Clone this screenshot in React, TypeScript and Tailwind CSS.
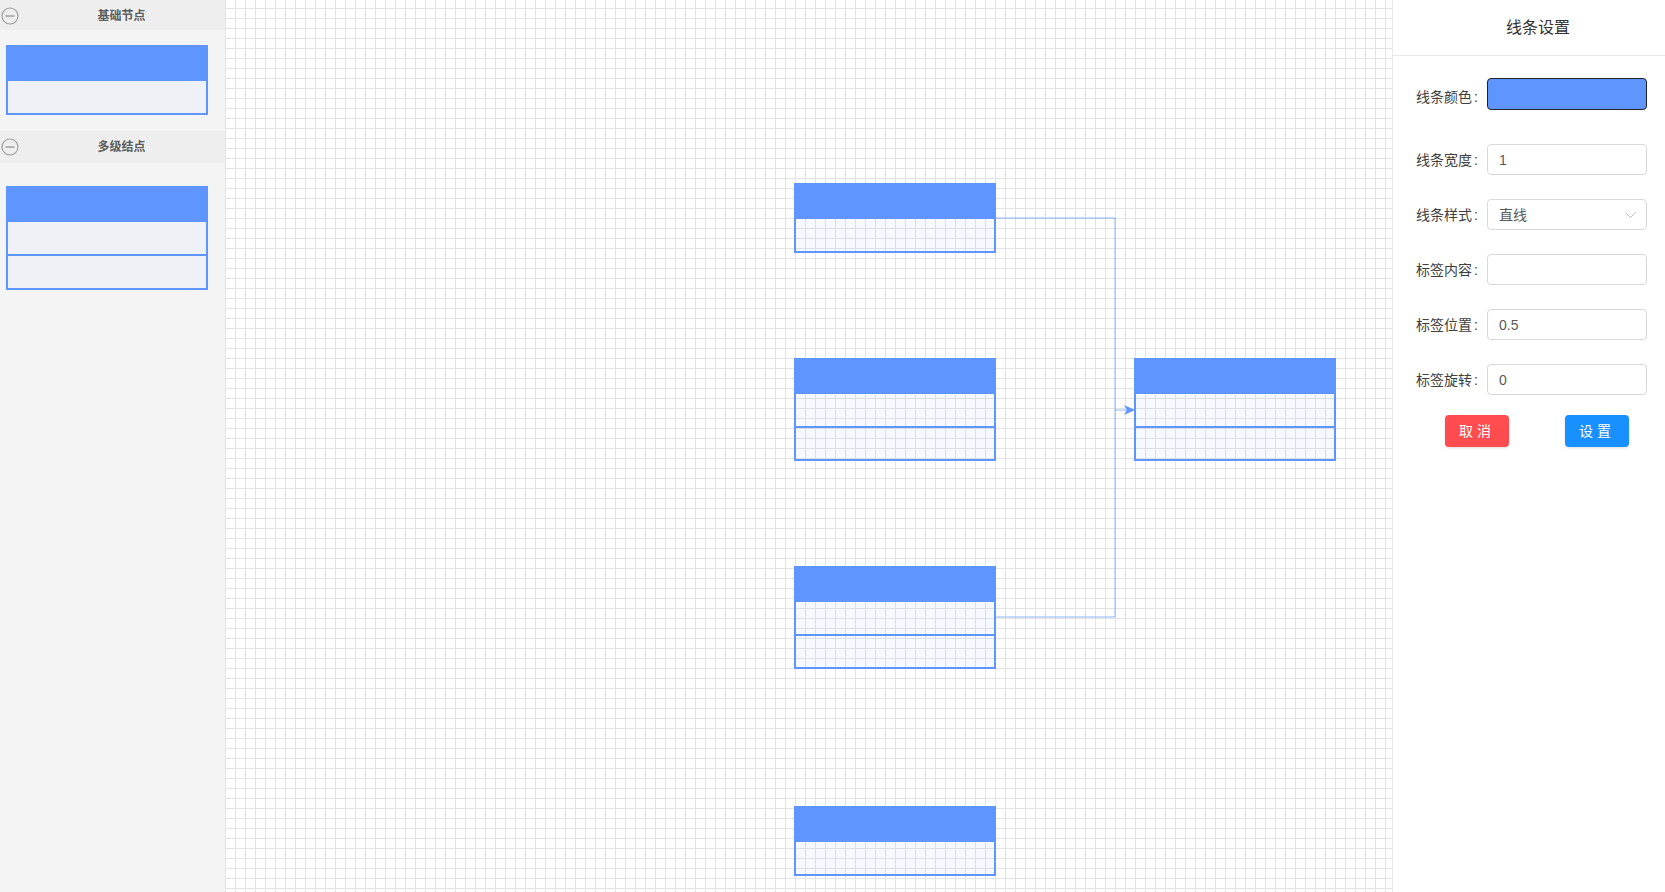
import React from "react";

const font = { fontFamily: '"Liberation Sans", "Noto Sans CJK SC", sans-serif' };

function MinusCircle() {
  return (
    <svg width="18" height="18" viewBox="0 0 18 18" className="shrink-0">
      <circle cx="9" cy="9" r="8" fill="none" stroke="#9a9a9a" strokeWidth="1.1" />
      <line x1="4.5" y1="9" x2="13.5" y2="9" stroke="#9a9a9a" strokeWidth="1.4" />
    </svg>
  );
}

function SideNode({ rows }: { rows: number }) {
  return (
    <div className="w-[202px] border-2 border-[#5f95ff] bg-[#5f95ff]">
      <div className="h-[34px]" />
      {Array.from({ length: rows }).map((_, i) => (
        <div
          key={i}
          className={i === 0 ? "h-[32px] bg-[#eef1f6]" : "h-[34px] border-t-2 border-[#5f95ff] bg-[#eef1f6]"}
        />
      ))}
    </div>
  );
}

function CanvasNode({ left, top, rows }: { left: number; top: number; rows: number }) {
  return (
    <div className="absolute w-[202px] border-2 border-[#5f95ff]" style={{ left, top }}>
      <div className="h-[34px] bg-[#5f95ff]" />
      {Array.from({ length: rows }).map((_, i) => (
        <div
          key={i}
          className={
            i === 0
              ? "h-[31.5px] bg-[rgba(95,149,255,0.06)]"
              : "h-[33.5px] border-t-2 border-[#5f95ff] bg-[rgba(95,149,255,0.06)]"
          }
        />
      ))}
    </div>
  );
}

function Field({ label, children, shift }: { label: string; children: React.ReactNode; shift?: boolean }) {
  return (
    <div className="flex items-center">
      <div
        className={
          shift
            ? "flex w-[94px] shrink-0 justify-end pt-[7px] text-[14px] text-[#404040]"
            : "flex w-[94px] shrink-0 justify-end pt-[1px] text-[14px] text-[#404040]"
        }
      >
        <span>{label}</span>
        <span className="ml-[2px] mr-[9px]">:</span>
      </div>
      {children}
    </div>
  );
}

function TextInput({ value }: { value: string }) {
  return (
    <div className="flex h-[31px] w-[160px] items-center rounded-[4px] border border-[#d9d9d9] bg-white px-[11px] pt-[1px] text-[14px] text-[#595959]">
      {value}
    </div>
  );
}

export default function App() {
  return (
    <div className="flex h-[892px] w-full overflow-hidden bg-white" style={font}>
      {/* left stencil */}
      <div className="w-[225px] shrink-0 bg-[#f4f4f4]">
        <div className="flex h-[30px] items-center bg-[#eeeeee] pl-[1px] pt-[2px]">
          <MinusCircle />
          <div className="flex-1 pr-[1px] text-center text-[12px] font-bold text-[#5c5c5c]">基础节点</div>
        </div>
        <div className="px-[6px] pb-[16px] pt-[15px]">
          <SideNode rows={1} />
        </div>
        <div className="flex h-[32px] items-center bg-[#eeeeee] pl-[1px]">
          <MinusCircle />
          <div className="flex-1 pr-[1px] text-center text-[12px] font-bold text-[#5c5c5c]">多级结点</div>
        </div>
        <div className="px-[6px] pt-[23px]">
          <SideNode rows={2} />
        </div>
      </div>

      {/* canvas */}
      <div className="relative flex-1 bg-white bg-[linear-gradient(to_right,#e3e3e3_1px,transparent_1px),linear-gradient(to_bottom,#e3e3e3_1px,transparent_1px)] bg-[size:10px_10px] bg-[position:0_8px]">
        <svg className="absolute left-0 top-0 h-full w-full" fill="none">
          <path d="M771 218 H890 V410 H903" stroke="#5f95ff" strokeWidth="1" opacity="0.7" />
          <path d="M771 617 H890 V410" stroke="#5f95ff" strokeWidth="1" opacity="0.7" />
          <path d="M910 410 L899 405 L902 410 L899 415 Z" fill="#5f95ff" />
        </svg>
        <CanvasNode left={569} top={183} rows={1} />
        <CanvasNode left={569} top={358} rows={2} />
        <CanvasNode left={569} top={566} rows={2} />
        <CanvasNode left={569} top={806} rows={1} />
        <CanvasNode left={909} top={358} rows={2} />
      </div>

      {/* right config panel */}
      <div className="w-[273px] shrink-0 border-l border-[#e8e8e8] bg-white">
        <div className="flex h-[56px] items-center justify-center border-b border-[#e8e8e8] pl-[18px] text-[16px] text-[#333]">
          线条设置
        </div>
        <div className="flex flex-col pr-[18px]">
          <div className="mt-[22px]">
            <Field label="线条颜色" shift>
              <div className="h-[32px] w-[160px] rounded-[4px] border border-[#222] bg-[#5f95ff]" />
            </Field>
          </div>
          <div className="mt-[34px] flex flex-col gap-[24px]">
            <Field label="线条宽度">
              <TextInput value="1" />
            </Field>
            <Field label="线条样式">
              <div className="flex h-[31px] w-[160px] items-center justify-between rounded-[4px] border border-[#d9d9d9] bg-white pl-[11px] pr-[10px] pt-[1px] text-[14px] text-[#595959]">
                <span>直线</span>
                <svg width="11" height="7" viewBox="0 0 11 7" fill="none">
                  <path d="M0.5 0.5 L5.5 5.5 L10.5 0.5" stroke="#bfbfbf" strokeWidth="1" />
                </svg>
              </div>
            </Field>
            <Field label="标签内容">
              <TextInput value="" />
            </Field>
            <Field label="标签位置">
              <TextInput value="0.5" />
            </Field>
            <Field label="标签旋转">
              <TextInput value="0" />
            </Field>
          </div>
          <div className="mt-[20px] flex pl-[52px]">
            <button className="h-[32px] w-[64px] rounded-[4px] bg-[#ff4d4f] text-[14px] tracking-[4px] text-white shadow-sm">
              取消
            </button>
            <button className="ml-[56px] h-[32px] w-[64px] rounded-[4px] bg-[#1890ff] text-[14px] tracking-[4px] text-white shadow-sm">
              设置
            </button>
          </div>
        </div>
      </div>
    </div>
  );
}
